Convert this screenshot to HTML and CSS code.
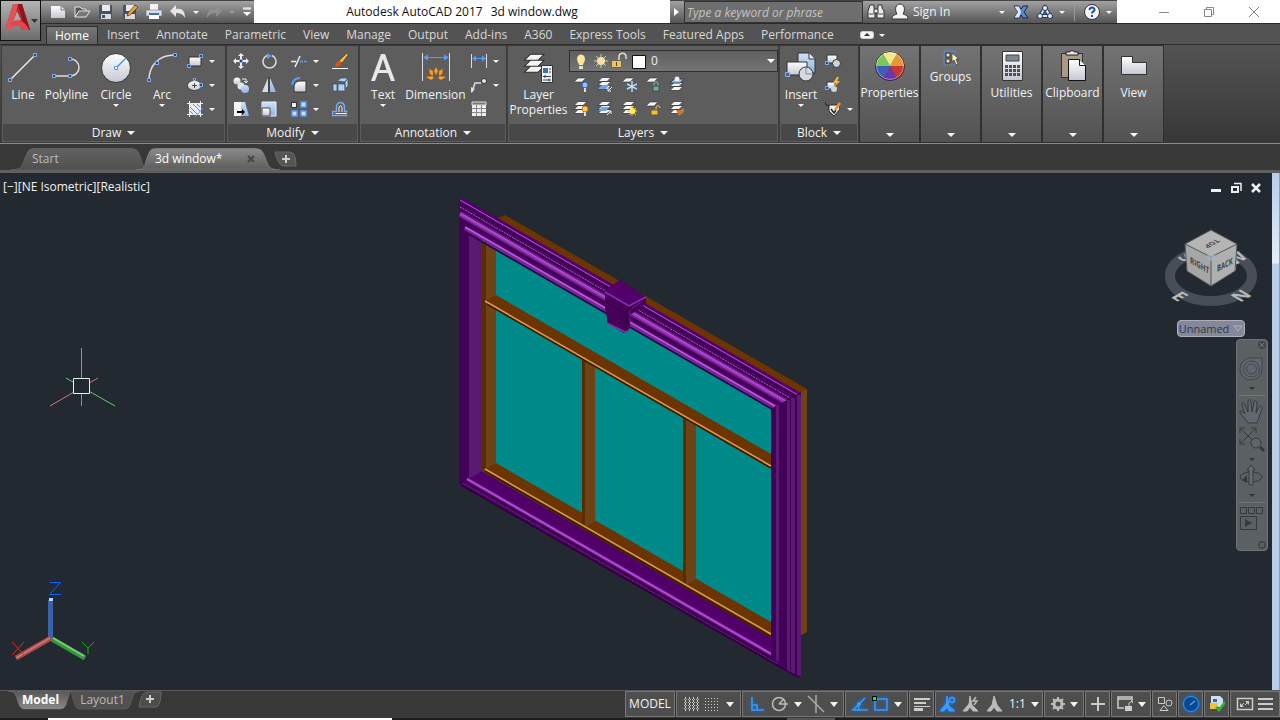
FILE: index.html
```html
<!DOCTYPE html>
<html lang="en">
<head>
<meta charset="utf-8">
<title>Autodesk AutoCAD 2017 - 3d window.dwg</title>
<link rel="stylesheet" href="styles.css">
</head>
<body>
<svg class="defs" aria-hidden="true">
  <defs>
    <linearGradient id="white" x1="0" y1="0" x2="0" y2="1"><stop offset="0" stop-color="#fff"/><stop offset="1" stop-color="#c4c8d2"/></linearGradient>
    <linearGradient id="blue" x1="0" y1="0" x2="0" y2="1"><stop offset="0" stop-color="#cfe0f5"/><stop offset="1" stop-color="#8db4e6"/></linearGradient>
    <linearGradient id="tabOff" x1="0" y1="0" x2="0" y2="1"><stop offset="0" stop-color="#626262"/><stop offset="1" stop-color="#4f4f4f"/></linearGradient>
    <linearGradient id="tabOn" x1="0" y1="0" x2="0" y2="1"><stop offset="0" stop-color="#8a8a8a"/><stop offset="1" stop-color="#5c5c5c"/></linearGradient>
    <linearGradient id="tabOnDown" x1="0" y1="0" x2="0" y2="1"><stop offset="0" stop-color="#565656"/><stop offset="1" stop-color="#8a8a8a"/></linearGradient>
    <symbol id="sheets" viewBox="0 0 16 16"><path d="M5 9.500h9l-4 4H1zM5 5.500h9l-4 4H1zM5 1.500h9l-4 4H1z" fill="#f4f5f7" stroke="#2c2c2c" stroke-width=".7"/></symbol>
    <symbol id="sheet" viewBox="0 0 16 16"><path d="M5 2h8L9 6H1z" fill="#f2f3f5" stroke="#333" stroke-width=".6"/></symbol>
  </defs>
</svg>
<div class="app">
  <header class="header">
    <button class="app-menu" aria-label="Application menu">
      <svg width="38" height="38" viewBox="0 0 38 38"><path d="M3 28 11 2h9l8 26h-8l-2-7-8 2-1 5z" fill="#b8252b"/><path d="M11 2h5L10 28H3z" fill="#df5359"/><path d="m15 9 4 9-8 3z" fill="#a9a9a9"/><path d="m16 2 4 0 8 26h-5z" fill="#8f151b"/><path d="M9 21c5-5 14-3 18 7h-6c-3-5-7-5-13-3z" fill="#e6444a"/><path d="M29 17h7l-3.500 4z" fill="#263645"/></svg>
    </button>
    <div class="titlebar">
      <div class="quick">
        <button aria-label="New"><svg width="18" height="16"><path d="M2 2h10l4 4v8H2z" fill="url(#white)"/><path d="M12 2v4h4" fill="none" stroke="#777"/></svg></button>
        <button aria-label="Open"><svg width="18" height="16"><path d="M2 13V3h5l2 2h4v3H6z" fill="#555" stroke="#dfe3ea"/><path d="M2 13 6 7h11l-4 6z" fill="#777" stroke="#dfe3ea"/></svg></button>
        <button aria-label="Save"><svg width="18" height="16"><path d="M2 1h13v14H2z" fill="#475363"/><path d="M5 1h8v6H5z" fill="#e6e9ee"/><path d="M4 10h10v5H4z" fill="#d5dae1"/><path d="M5 11h3v3H5z" fill="#475363"/></svg></button>
        <button aria-label="Save as"><svg width="18" height="16"><path d="M2 1h13v14H2z" fill="#475363"/><path d="M5 1h8v6H5z" fill="#e6e9ee"/><path d="M4 10h10v5H4z" fill="#d5dae1"/><path d="m6 12 1-3 7-8 3 2-8 8z" fill="#f1a33a" stroke="#4b3210" stroke-width=".7"/></svg></button>
        <button aria-label="Plot"><svg width="18" height="16"><path d="M5 0h8v6H5z" fill="#f3f3f3"/><path d="M1 6h16v6H1z" fill="#d9dce2" stroke="#666" stroke-width=".5"/><path d="M4 9h10v2H4z" fill="#3c6fb4"/><path d="M4 11h10v4H4z" fill="#fff"/></svg></button>
        <button aria-label="Undo"><svg width="18" height="16"><path d="m1 7 6-6v4c6-1 9 2 9 9-2-4-5-5-9-5v4z" fill="#e2e6ec"/></svg><i class="caret"></i></button>
        <button aria-label="Redo"><svg width="18" height="16"><path d="m17 7-6-6v4C5 4 2 7 2 14c2-4 5-5 9-5v4z" fill="#8e8e8e"/></svg><i class="caret dim"></i></button>
        <button aria-label="Customize"><svg width="12" height="12"><path d="M2 2h8M2 3h8" stroke="#fff"/><path d="M2 6h8l-4 4z" fill="#fff"/></svg></button>
      </div>
      <h1 class="doc-title"><span>Autodesk AutoCAD 2017</span><span>3d window.dwg</span></h1>
      <div class="info">
        <button class="expand" aria-label="Collapse search"><svg width="6" height="10"><path d="m0 1 5 4-5 4z" fill="#fff"/></svg></button>
        <input class="search" type="text" aria-label="Search" placeholder="Type a keyword or phrase">
        <button class="find" aria-label="Find"><svg width="18" height="16"><path d="M3 1h4v3l1 2v8H1V7zM11 1h4v3l2 3v7h-7V6l1-2z" fill="#e9e9ee" stroke="#333"/><path d="M7 5h4v4H7z" fill="#e9e9ee" stroke="#333"/><path d="M2 10h5M11 10h5" stroke="#555"/></svg></button>
        <button class="sign"><svg width="18" height="18"><path d="M1 16c0-4 3-4 5-5C3 6 5 1 9 1s6 5 3 10c2 1 5 1 5 5z" fill="#f4f4f8" stroke="#333"/></svg><span>Sign In</span><i class="caret"></i></button>
        <button aria-label="Exchange"><svg width="16" height="16"><path d="M1 2h5l2 3 2-3h5l-4 6 4 6h-5l-2-3-2 3H1l4-6z" fill="#5f84d4" stroke="#18264e"/><path d="M1.500 2.500H6L8 8l-2 5.500H1.500L5 8z" fill="#dfe5f3"/></svg></button>
        <button aria-label="A360"><svg width="18" height="16"><path d="m9 4-5 8h10z" fill="none" stroke="#20355f" stroke-width="4"/><path d="m9 4-5 8h10z" fill="none" stroke="#e3e7f2" stroke-width="2"/><g fill="#e7ebf5" stroke="#20355f"><circle cx="9" cy="4" r="2.500"/><circle cx="4" cy="12" r="2.500"/><circle cx="14" cy="12" r="2.500"/></g></svg><i class="caret"></i></button>
        <button class="help" aria-label="Help"><svg width="18" height="18"><circle cx="9" cy="9" r="7.500" fill="#f4f6fa" stroke="#333"/><path d="M6.500 7c0-3.500 5.500-3 5 0-.3 1.500-2.500 1.500-2.500 3.500M9 12v2" fill="none" stroke="#1b4db5" stroke-width="2"/></svg><i class="caret"></i></button>
      </div>
      <div class="win">
        <button aria-label="Minimize"><svg width="12" height="12"><path d="M1 6.500h10" stroke="#888"/></svg></button>
        <button aria-label="Restore"><svg width="12" height="12" fill="none" stroke="#888"><path d="M1.500 3.500h7v7h-7zM3.500 3V1.500h7v7H9"/></svg></button>
        <button aria-label="Close"><svg width="12" height="12"><path d="m1 1 10 10M11 1 1 11" stroke="#888"/></svg></button>
      </div>
    </div>
    <nav class="tabs">
      <button class="on">Home</button><button>Insert</button><button>Annotate</button><button>Parametric</button><button>View</button><button>Manage</button><button>Output</button><button>Add-ins</button><button>A360</button><button>Express Tools</button><button>Featured Apps</button><button>Performance</button>
      <button class="mini" aria-label="Minimize ribbon"><svg width="14" height="8"><rect x=".5" y=".5" width="13" height="7" rx="2" fill="#f4f4f4" stroke="#ccc"/><path d="M4 5h6L7 2z" fill="#333"/></svg><i class="caret"></i></button>
    </nav>
  </header>

  <section class="ribbon">
    <div class="panel draw">
      <div class="body">
        <button class="big"><svg width="32" height="32"><path d="M3 28 28 3" stroke="#eee" stroke-width="1.500"/><path d="M1.500 26.500h3v3h-3zM26.500 1.500h3v3h-3z" fill="#345" stroke="#7fb0ff"/></svg><span>Line</span></button>
        <button class="big"><svg width="32" height="32"><path d="M3 24h16c12 0 12-17 0-17" fill="none" stroke="#ddd" stroke-width="1.500"/><path d="M1.500 22.500h3v3h-3zM17.500 22.500h3v3h-3zM17.500 5.500h3v3h-3z" fill="#345" stroke="#7fb0ff"/></svg><span>Polyline</span></button>
        <button class="big"><svg width="32" height="32"><circle cx="16" cy="16" r="14.500" fill="url(#white)" stroke="#333"/><path d="M16 16 26 6" stroke="#4c8df0" stroke-width="1.500"/><path d="M14.500 14.500h3v3h-3z" fill="#fff" stroke="#4c8df0"/></svg><span>Circle</span><i class="caret"></i></button>
        <button class="big"><svg width="32" height="32"><path d="M3 28C3 14 12 3 29 3" fill="none" stroke="#ddd" stroke-width="1.500"/><path d="M1.500 26.500h3v3h-3zM9.500 9.500h3v3h-3zM27.500 1.500h3v3h-3z" fill="#345" stroke="#7fb0ff"/></svg><span>Arc</span><i class="caret"></i></button>
        <div class="small">
          <button aria-label="Rectangle"><svg width="16" height="16"><path d="M2 4h12v9H2z" fill="url(#white)" stroke="#333"/><path d="M.5 11.500h3v3h-3zM12.500 1.500h3v3h-3z" fill="#345" stroke="#7fb0ff"/></svg><i class="caret"></i></button>
          <button aria-label="Ellipse"><svg width="16" height="16"><ellipse cx="7.500" cy="8.500" rx="7" ry="5" fill="url(#white)" stroke="#444"/><path d="M5 8.500h5M7.500 6v5" stroke="#444"/><path d="M6.500 1.500h2v2h-2zM12.500 6.500h3v3h-3z" fill="#345" stroke="#7fb0ff"/></svg><i class="caret"></i></button>
          <button aria-label="Hatch"><svg width="16" height="16"><path d="M3 3h10v10H3z" fill="#e8edf5"/><path d="m3 6 7 7M3 10l3 3M6 3l7 7M10 3l3 3" stroke="#5a8ed8"/><path d="M0 2.500h16M0 13.500h16M2.500 0v16M13.500 0v16" stroke="#eee"/><path d="m8 16 8-9" stroke="#5b9bff"/></svg><i class="caret"></i></button>
        </div>
      </div>
      <button class="foot">Draw<i class="caret lg"></i></button>
    </div>

    <div class="panel modify">
      <div class="body">
        <div class="grid4">
          <button aria-label="Move"><svg width="16" height="16"><path d="M8 0l3 3H9v3H7V3H5zM8 16l3-3H9v-3H7v3H5zM0 8l3-3v2h3v2H3v2zM16 8l-3-3v2h-3v2h3v2z" fill="#eee"/><path d="M6.500 6.500h3v3h-3z" fill="#345" stroke="#7fb0ff"/></svg></button>
          <button aria-label="Rotate"><svg width="16" height="16"><path d="M11 2.500a6.500 6.500 0 1 1-5 0" fill="none" stroke="#ddd" stroke-width="1.500"/><path d="m6 0 5 3-5 3z" fill="#5b9bff"/></svg></button>
          <button aria-label="Trim"><svg width="16" height="16"><path d="M0 8.500h5M4 14 9 3" stroke="#eee" stroke-width="1.500"/><path d="M9 8.500h7" stroke="#5b9bff" stroke-width="1.500" stroke-dasharray="3 1"/></svg><i class="caret"></i></button>
          <button aria-label="Erase"><svg width="16" height="16"><path d="m7 8 8-8 1 2-6 8z" fill="#f3c04a" stroke="#5b3a10" stroke-width=".6"/><path d="M3 14c0-4 2-6 5-6l1 2c0 3-3 4-6 4z" fill="#d5541e"/><path d="M0 15.500h16" stroke="#fff"/></svg></button>
          <button aria-label="Copy"><svg width="16" height="16"><circle cx="4" cy="4" r="3.500" fill="url(#white)"/><circle cx="8" cy="9" r="3.500" fill="#dfe6f2"/><circle cx="12" cy="12" r="4" fill="url(#blue)"/><path d="M9 2h4v3M11 4l2 2 2-2" stroke="#eee" fill="none"/></svg></button>
          <button aria-label="Mirror"><svg width="16" height="16"><path d="M7 1v14H1z" fill="#d9dbe0"/><path d="M9 1v14h6z" fill="url(#blue)"/><path d="M8 0v16" stroke="#333"/></svg></button>
          <button aria-label="Fillet"><svg width="16" height="16"><path d="M3 15V9q1-5 6-5h6v11z" fill="url(#white)" stroke="#333"/><path d="M1 8Q2 1 9 1" fill="none" stroke="#5b9bff" stroke-width="2"/></svg><i class="caret"></i></button>
          <button aria-label="Explode"><svg width="16" height="16"><path d="M5 4 9 1h7l-3 4zM13 5l3-4v8l-3 3zM1 7h4v7H1zM6 7h7v7H6z" fill="#b9cfe9" stroke="#345679" stroke-width=".8"/></svg></button>
          <button aria-label="Stretch"><svg width="16" height="16"><path d="M1 1h7v14H1z" fill="#f5f5f5"/><path d="M8 1h4l4 14H8z" fill="url(#blue)"/><path d="M4 11h6" stroke="#000" stroke-width="2"/><path d="m9 8 3 3-3 3z"/></svg></button>
          <button aria-label="Scale"><svg width="16" height="16"><path d="M1 1h14v14H1z" fill="url(#blue)" stroke="#eef"/><path d="M1 7h8v8H1z" fill="url(#white)" stroke="#444"/></svg></button>
          <button aria-label="Array"><svg width="16" height="16"><path d="M.5 1.500h5v5h-5z" fill="#eee" stroke="#333"/><path d="M10 1h5v5h-5zM1 10h5v5H1zM10 10h5v5h-5z" fill="#cfe0f5" stroke="#5b9bff" stroke-width="1.500"/></svg><i class="caret"></i></button>
          <button aria-label="Offset"><svg width="16" height="16"><path d="M15.500 14.500h-15v-4h4V5q1-3.500 4-3.500T12.500 5v5.500h3" fill="none" stroke="#79a9ee" stroke-width="1.500"/><path d="M15 12.500H3.500M7 11V6q2-3 3 0v5" fill="none" stroke="#eee"/></svg></button>
        </div>
      </div>
      <button class="foot">Modify<i class="caret lg"></i></button>
    </div>

    <div class="panel anno">
      <div class="body">
        <button class="big"><svg width="32" height="32"><path d="M4 29 14 2h4l10 27h-4l-3-8H11l-3 8zM12.500 18h7L16 7z" fill="#e8e8e8"/></svg><span>Text</span><i class="caret"></i></button>
        <button class="big"><svg width="32" height="32"><path d="M2.500 1v28M29.500 1v28" stroke="#ddd"/><path d="M5 5.500h22" stroke="#5b9bff"/><path d="m3 5.500 5-3v6zM29 5.500l-5-3v6z" fill="#5b9bff"/><g fill="#ffa52a" stroke="#b8651a" stroke-width=".5"><path d="m16 15 2 4-2 4-2-4zM9 17l4 2 0 5-3-2zM23 17l-4 2 0 5 3-2zM6 25l6-1 2 2-3 2zM26 25l-6-1-2 2 3 2z"/></g></svg><span>Dimension</span></button>
        <div class="small">
          <button aria-label="Linear"><svg width="16" height="16"><path d="M.5 1v14M15.500 1v14" stroke="#ddd"/><path d="M2 5.500h12" stroke="#5b9bff"/><path d="m1 5.500 4-3v6zM15 5.500l-4-3v6z" fill="#5b9bff"/></svg><i class="caret"></i></button>
          <button aria-label="Leader"><svg width="16" height="16"><path d="M1 15 4 6h6" fill="none" stroke="#ddd" stroke-width="1.500"/><circle cx="13" cy="4" r="2.500" fill="#e5e8ee" stroke="#333"/><path d="m0 16 0-6 4 2z" fill="#ddd"/></svg><i class="caret"></i></button>
          <button aria-label="Table"><svg width="16" height="16"><path d="M1 1h14v14H1z" fill="#eee"/><path d="M1 1h14v3H1z" fill="#777" stroke="#ddd"/><path d="M1 7.500h14M1 11.500h14M5.500 4v11M10.500 4v11" stroke="#888"/></svg></button>
        </div>
      </div>
      <button class="foot">Annotation<i class="caret lg"></i></button>
    </div>

    <div class="panel layers">
      <div class="body">
        <button class="big"><svg width="32" height="32"><use href="#sheets" x="0" y="0" width="24" height="24"/><path d="M18.500 13.500h11v17h-11z" fill="#f2f3f6" stroke="#333"/><path d="M20 16h5v5h-5z" fill="#3d70b5"/><path d="M26 17h2M26 20h2M20 24.500h8M20 28h8M22 23v3M26 26.500v3" stroke="#345"/></svg><span>Layer<br>Properties</span></button>
        <div class="layer-tools">
          <div class="combo">
            <svg width="84" height="18"><path d="M4 7c0-6 8-6 8 0 0 3-2 4-2 6H6c0-2-2-3-2-6z" fill="#fbe69a"/><path d="M6 14h4v3H6z" fill="#ddd"/><g stroke="#d2ccbb"><path d="M28 2v14M21 9h14M23 4l10 10M33 4 23 14"/></g><circle cx="28" cy="9" r="4" fill="#f9dfa0"/><path d="M46 9V5c0-5 7-5 7 0v2" fill="none" stroke="#e6e0c8" stroke-width="1.500"/><path d="M38.500 8.500h10v7h-10z" fill="#e8c45a" stroke="#665"/><path d="M43.500 10v4" stroke="#543"/><path d="M59.500 3.500h13v13h-13z" fill="#fff" stroke="#111"/></svg>
            <select aria-label="Layer"><option>0</option></select>
          </div>
          <div class="layer-grid">
            <button aria-label="Off"><svg width="16" height="16"><use href="#sheet" width="16" height="16"/><circle cx="12" cy="9" r="3" fill="#8fc2fa" stroke="#2b63a8"/><path d="M11 12h2v4h-2z" fill="#ddd"/></svg></button>
            <button aria-label="Isolate"><svg width="16" height="16"><use href="#sheets" width="16" height="16"/><path d="M5 9h7l-3 4H1z" fill="#6aa5ee"/><path d="m15 11-4 4m0-3v3h3" stroke="#eee" fill="none"/></svg></button>
            <button aria-label="Freeze"><svg width="16" height="16"><use href="#sheet" width="16" height="16"/><path d="M11 5v11M6 8l10 5M6 13l10-5" stroke="#b7dcff" stroke-width="1.500"/></svg></button>
            <button aria-label="Lock"><svg width="16" height="16"><use href="#sheet" width="16" height="16"/><path d="M9 10V8c0-3 4-3 4 0v2" fill="none" stroke="#9bb"/><path d="M8 10h6v5H8z" fill="#7ba7a6" stroke="#355"/></svg></button>
            <button aria-label="Make current"><svg width="16" height="16"><use href="#sheets" y="1" width="16" height="16"/><path d="M5 3h10l-4 4H1z" fill="#8ebcf0" stroke="#345"/><circle cx="8" cy="3" r="2.500" fill="#eee"/></svg></button>
            <button aria-label="All on"><svg width="16" height="16"><use href="#sheets" width="16" height="16"/><circle cx="12" cy="9" r="3" fill="#ffcd55" stroke="#d46b10"/><path d="M11 12h2v4h-2z" fill="#ddd"/></svg></button>
            <button aria-label="Unisolate"><svg width="16" height="16"><use href="#sheets" width="16" height="16"/><path d="M5 7h7l-3 4H1z" fill="#6aa5ee"/><path d="m10 15 4-4m-3 0h3v3" stroke="#eee" fill="none"/></svg></button>
            <button aria-label="Thaw"><svg width="16" height="16"><use href="#sheets" width="16" height="16"/><path d="M11 6v10M6 11h10M8 8l7 7M15 8l-7 7" stroke="#ffb733"/><circle cx="11.500" cy="11" r="3" fill="#ffe84b"/></svg></button>
            <button aria-label="Unlock"><svg width="16" height="16"><use href="#sheet" width="16" height="16"/><path d="M11 10V8c0-3 4-3 4 0" fill="none" stroke="#f3d35a"/><path d="M6 10h7v5H6z" fill="#f4c622" stroke="#654"/></svg></button>
            <button aria-label="Match"><svg width="16" height="16"><use href="#sheets" width="16" height="16"/><path d="m7 10 4 0 4-2 0 4-5 4z" fill="#c67931"/></svg></button>
          </div>
        </div>
      </div>
      <button class="foot">Layers<i class="caret lg"></i></button>
    </div>

    <div class="panel block">
      <div class="body">
        <button class="big"><svg width="32" height="32"><path d="M13 1h11l6 6v14H13z" fill="url(#blue)" stroke="#333"/><path d="M24 1v6h6" fill="#eef" stroke="#333"/><path d="M2 10h20v13H2z" fill="url(#white)" stroke="#333"/><circle cx="21" cy="22" r="7" fill="#d5d9e1" stroke="#333"/><path d="M21 22v-7M21 22h7" stroke="#888"/><path d="M.5 20.500h4v4h-4z" fill="#567" stroke="#7fb0ff"/></svg><span>Insert</span><i class="caret"></i></button>
        <div class="small">
          <button aria-label="Create block"><svg width="16" height="16"><path d="M2 2h10v8H2z" fill="url(#white)" stroke="#333"/><circle cx="11.500" cy="10.500" r="4" fill="#cfd3dc" stroke="#333"/><path d="M.5 8.500h3v3h-3z" fill="#345" stroke="#7fb0ff"/></svg></button>
          <button aria-label="Edit block"><svg width="16" height="16"><path d="M2 5h8v7H2z" fill="url(#white)" stroke="#333"/><circle cx="9" cy="12" r="3" fill="#cfd3dc"/><path d="m12 0-4 6h3l-2 4 6-6h-3l2-4z" fill="#ffbb3a"/><path d="M.5 9.500h3v3h-3z" fill="#345" stroke="#7fb0ff"/></svg></button>
          <button aria-label="Edit attributes"><svg width="16" height="16"><path d="M4 4h9l2 4-6 7-5-5z" fill="#eee" stroke="#333"/><path d="m6 8 3 4 2-3" stroke="#222" stroke-width="1.500" fill="none"/><path d="m10 9 5-7" stroke="#f0992b" stroke-width="2.500"/><path d="M0 1c0 3 2 3 4 4" stroke="#111" fill="none"/></svg><i class="caret"></i></button>
        </div>
      </div>
      <button class="foot">Block<i class="caret lg"></i></button>
    </div>

    <button class="folded"><svg width="32" height="32"><path d="M16 16 8.500 3a15 15 0 0 1 15 0z" fill="#f3e98a"/><path d="m16 16 7.500-13A15 15 0 0 1 31 16z" fill="#e8963a"/><path d="M16 16h15a15 15 0 0 1-7.500 13z" fill="#c33a33"/><path d="m16 16 7.500 13a15 15 0 0 1-15 0z" fill="#6d35a5"/><path d="M16 16 8.500 29A15 15 0 0 1 1 16z" fill="#3c5fb8"/><path d="M16 16H1A15 15 0 0 1 8.500 3z" fill="#7cc75c"/><circle cx="16" cy="16" r="14.500" fill="none" stroke="#2c2c3c"/><circle cx="16" cy="16" r="13.500" fill="none" stroke="#fff" opacity=".4"/></svg><span>Properties</span><i class="caret lg"></i></button>
    <button class="folded"><svg width="16" height="16"><path d="M1 1h11v14H1z" fill="none" stroke="#5b9bff" stroke-dasharray="1 1"/><path d="M3 3h4v4H3zM3 9h4v4H3z" fill="#e9dfa6" stroke="#333"/><path d="m9 3 0 9 2-2 2 5 2-1-2-5h3z" fill="#f7f0b8" stroke="#333" stroke-width=".7"/></svg><span>Groups</span><i class="caret lg"></i></button>
    <button class="folded"><svg width="32" height="32"><path d="M6.500 1.500h20v29h-20z" fill="url(#white)" stroke="#333"/><path d="M10 5h13v6H10z" fill="#7b8794" stroke="#444"/><path d="M9 16.500h15M9 20.500h15M9 24.500h15" stroke="#49525c" stroke-width="3" stroke-dasharray="3 1"/></svg><span>Utilities</span><i class="caret lg"></i></button>
    <button class="folded"><svg width="32" height="32"><path d="M4.500 3.500h21v24h-21z" fill="#a99a88" stroke="#333"/><path d="M9 5V2h3q3-3 6 0h3v3z" fill="#e5e7ec" stroke="#222"/><path d="M11.500 9.500h11l6 6v15h-17z" fill="url(#white)" stroke="#111"/><path d="M22.500 9.500v6h6" fill="#fff" stroke="#111"/></svg><span>Clipboard</span><i class="caret lg"></i></button>
    <button class="folded"><svg width="32" height="32"><path d="M3.500 6.500h11v6h14v12h-25z" fill="url(#white)" stroke="#333"/></svg><span>View</span><i class="caret lg"></i></button>
  </section>

  <nav class="files">
    <button class="file"><svg width="138" height="22" viewBox="0 0 138 22"><path d="M0 22c12 0 12-4 15-12S19 .5 26 .5h94c9 0 9 5 11 11s3 10 7 10.500z" fill="url(#tabOff)" stroke="#6e6e6e" stroke-width=".6"/></svg><span>Start</span></button>
    <button class="file current"><svg width="144" height="22" viewBox="0 0 144 22"><path d="M0 22c10 0 8-4 11-12S14 .5 22 .5h96c8 0 9 3 12 11s4 10 14 10.500z" fill="url(#tabOn)" stroke="#8c8c8c" stroke-width=".6"/></svg><span>3d window*</span><b><svg width="8" height="8"><path d="m1 1 6 6M7 1 1 7" stroke="#444" stroke-width="2"/></svg></b></button>
    <button class="add" aria-label="New drawing"><svg width="24" height="16"><path d="M1 1h15q6 0 6 14H10Q4 15 1 1z" fill="#555" stroke="#686868"/><path d="M12 4v8M8 8h8" stroke="#ccc" stroke-width="2"/></svg></button>
  </nav>

  <main class="viewport">
    <div class="vp-label">[−][NE Isometric][Realistic]</div>
    <div class="vp-win">
      <button aria-label="Minimize drawing"><svg width="12" height="12"><path d="M1 7h10v3H1z" fill="#eee"/></svg></button>
      <button aria-label="Restore drawing"><svg width="12" height="12" fill="none" stroke="#eee"><path d="M2 5h6v5H2z" stroke-width="2"/><path d="M4 1.500h7V9" stroke-width="1.500"/></svg></button>
      <button aria-label="Close drawing"><svg width="12" height="12"><path d="m2 2 8 8M10 2l-8 8" stroke="#eee" stroke-width="2.500"/></svg></button>
    </div>

    <svg class="model" width="356" height="486" viewBox="455 195 356 486">
      <path d="M498 218 505 215 807 389v243l-6 3-20-230z" fill="#6b3400"/>
      <path d="M801 392 807 389v243l-6 3z" fill="#6e4316"/>
      <path d="M459 200 463 198 801 393v283l-3 2-339-194z" fill="#51006a"/>
      <path d="M482 238 771 405v232L482 471z" fill="#008b8a"/>
      <path d="M459 214 469 222v258l-10 5z" fill="#430059"/>
      <path d="M469 234 482 242v229l-13 8z" fill="#5a1a72"/>
      <path d="M482 242h4v226l-4 3z" fill="#5a2d00"/>
      <path d="M486 244 496 250v214l-10 5z" fill="#6e4316"/>
      <path d="M485 301 496 295 771 454v14L485 303z" fill="#6b3400"/>
      <path d="M485 469 496 463 771 622v16L482 471z" fill="#6b3400"/>
      <path d="M582 358v168l3 2V360z" fill="#5a2d00"/><path d="M585 360 595 366v155l-10 6z" fill="#6e4316"/>
      <path d="M683 417v167l3 2V419z" fill="#5a2d00"/><path d="M686 419 696 424v155l-10 6z" fill="#6e4316"/>
      <path d="m487 304 284 164M485 471l286 166" stroke="#3e2000" stroke-width="2"/>
      <path d="m485 301 286 165M485 469l286 165" stroke="#e09a55" stroke-width="1.500"/>
      <path d="m466 482 308 178M461 485l337 192" stroke="#32003f" stroke-width="2"/>
      <path d="m463 483 315 181" stroke="#72248c" stroke-width="1" stroke-dasharray="2 1"/>
      <path d="m467 479 306 176" stroke="#9230b4" stroke-width="3"/><path d="m467 479 306 176" stroke="#c05ce0" stroke-width="1"/>
      <path d="m462 204 336 194M462 210l330 190M464 221l312 181M467 233l305 176" stroke="#380048" stroke-width="2"/>
      <path d="m460 200 338 195" stroke="#b858d6"/>
      <path d="m460 207 330 191" stroke="#b455d0" stroke-dasharray="2 1"/>
      <path d="m460 214 326 188" stroke="#6f1a8b" stroke-width="6"/><path d="m460 214 326 188" stroke="#9739b8" stroke-width="3"/><path d="m460 213 326 188" stroke="#b857d8" stroke-width="1"/>
      <path d="m465 228 310 179" stroke="#7a2298" stroke-width="4"/><path d="m465 227 310 179" stroke="#bd5cdc" stroke-width="1.500"/>
      <path d="M771 409 801 392v284l-3 1-27-20z" fill="#430059"/>
      <path d="M776 405h3v257l-3-2zM787 400h3v272l-3-2zM791 398h4v276l-4-2zM797 395h4v281l-4-1z" fill="#5a1a72"/>
      <path d="M605 290 620 280l26 17v6l-4 4-12 8v15l-6 3-17-10v-6l-2-8z" fill="#460058"/>
      <path d="M605 291 620 280l26 17-17 9z" fill="#52006a"/>
      <path d="m605 292 24 14 17-9M607 323l18 9 5-3" fill="none" stroke="#8c2fae" stroke-width="1.500"/>
      <path d="M630 310v12M632 308l10-6" stroke="#6a1f85"/>
      <path d="m606 302 21 12v17" fill="none" stroke="#2d003b"/>
    </svg>

    <svg class="cursor" width="68" height="60" viewBox="48 347 68 60"><path d="M81.500 348v58" stroke="#8e9299"/><path d="m98 378-48 28" stroke="#d17b72"/><path d="m66 378 49 28" stroke="#69c86b"/><path d="M73.500 378.500h16v15h-16z" fill="#232930" stroke="#eee"/></svg>

    <svg class="ucs" width="86" height="84" viewBox="10 580 86 84" fill="none"><path d="M50.500 640v-40" stroke="#3a62a8" stroke-width="5"/><path d="M49 598h4v3h-4z" fill="#a7dcff"/><path d="m52 639 33 19" stroke="#3a9340" stroke-width="5"/><path d="m53 638 31 18" stroke="#72d270" stroke-width="2"/><path d="m51 638-35 20" stroke="#a94a4a" stroke-width="5"/><path d="m50 638-34 20" stroke="#c97a76" stroke-width="1.500"/><path d="M49.500 582.500h11l-11 12h11.500" stroke="#0e62ff"/><path d="m12 642 12 13M24 642l-12 13" stroke="#ef2222"/><path d="m82 642 6 6 6-6M88 648v6" stroke="#12b312"/></svg>

    <svg class="cube" width="96" height="84" viewBox="1163 226 96 84">
      <ellipse cx="1211" cy="276" rx="41" ry="25" fill="none" stroke="#464e57" stroke-width="10"/>
      <g class="compass"><text transform="matrix(.85 .5 -.85 .5 1175 297)" x="-3" y="3">E</text><text transform="matrix(.85 -.5 .85 .5 1241 299)" x="-4" y="3">N</text><text transform="matrix(.85 .5 -.85 .5 1181 258)" x="-3" y="2">S</text><text transform="matrix(.85 -.5 .85 .5 1236 262)" x="-5" y="3">W</text></g>
      <path d="m1211 230 26 14-1 26-25 16-24-16-2-26z" fill="#b5b5b5"/>
      <path d="m1185 244 26 13v29l-24-15z" fill="#a6a6a6"/><path d="m1237 244-26 13v29l24-15z" fill="#b0b0b0"/>
      <path d="m1211 230 26 14-26 13-26-13zM1185 244l2 27 24 15 24-15 2-27M1211 257v29" fill="none" stroke="#555"/>
      <g class="faces"><text transform="matrix(.7 .4 0 1 1190 263)">RIGHT</text><text transform="matrix(.65 -.35 0 1 1217 272)">BACK</text><text transform="matrix(-.7 .38 -.7 -.38 1216 239)">TOP</text></g>
      <circle cx="1211" cy="257" r="4" fill="#a3b5c4" opacity=".7"/>
    </svg>
    <button class="ucs-name">Unnamed<svg width="10" height="8"><path d="M1 1h8L5 6z" fill="none" stroke="#b0b2c0"/></svg></button>

    <div class="navbar">
      <button class="corner" aria-label="Close navigation bar"><svg width="10" height="10"><circle cx="5" cy="5" r="4" fill="#42474c"/><path d="m3 3 4 4M7 3 3 7" stroke="#73777b"/></svg></button>
      <button class="tool" aria-label="Steering wheel"><svg width="26" height="24"><path d="M13 1h10v11A11 11 0 1 1 13 1z" fill="#62666e" stroke="#3f454a"/><circle cx="12.500" cy="12" r="8" fill="none" stroke="#3f454a"/><circle cx="12.500" cy="12" r="5" fill="none" stroke="#3f454a"/></svg></button>
      <i class="caret dark"></i><hr>
      <button class="tool" aria-label="Pan"><svg width="26" height="26"><path d="m9 24-7-9c-3-4 1-4 4 0L3 6c0-3 2-3 3 0l3 7V3c0-3 3-3 3 0l1 10 2-10c0-2 3-2 3 1l-1 10 3-6c2-2 4 0 3 2l-5 14z" fill="#62666e" stroke="#343b40"/></svg></button>
      <button class="tool" aria-label="Zoom"><svg width="26" height="26"><path d="m2 3 14 14M16 3 2 17M1 7V2h5M12 2h5v5M1 13v5h5" fill="none" stroke="#343b40"/><circle cx="17" cy="17" r="5" fill="#60656a" stroke="#343b40"/><path d="m21 21 4 4" stroke="#343b40" stroke-width="3"/></svg></button>
      <i class="caret dark"></i>
      <button class="tool" aria-label="Orbit"><svg width="26" height="24"><ellipse cx="12" cy="13" rx="11" ry="5" fill="none" stroke="#343b40"/><path d="m12 1 4 5h-2v15h-4V6H8z" fill="#666b70" stroke="#343b40"/><path d="m8 11-5 5 5 3z" fill="#343b40"/></svg></button>
      <i class="caret dark"></i><hr>
      <button class="tool" aria-label="Show motion"><svg width="26" height="26"><path d="M1.500 1.500h6v6h-6zM9.500 1.500h6v6h-6zM17.500 1.500h6v6h-6zM1.500 10.500h16v13h-16z" fill="none" stroke="#343b40"/><path d="m6 13 7 4-7 4z" fill="#343b40"/></svg></button>
      <button class="corner end" aria-label="Navigation bar options"><svg width="10" height="10"><circle cx="5" cy="5" r="4" fill="#42474c"/><path d="M3 4h4M3 6h4" stroke="#73777b"/></svg></button>
    </div>
    <div class="edge"></div>
  </main>

  <footer class="bottom">
    <nav class="layouts">
      <button class="layout current"><svg width="64" height="19" viewBox="0 0 64 19"><path d="M0 0c8 0 8 5 10 11s4 7 7 7h35c6 0 6-5 8-11s2-7 4-7z" fill="url(#tabOnDown)" stroke="#777" stroke-width=".6"/></svg><span>Model</span></button>
      <button class="layout"><svg width="70" height="19" viewBox="0 0 70 19"><path d="M0 0c2 1 2 5 4 11s3 7 7 7h43c6 0 6-4 8-10s3-7 8-8z" fill="#515151" stroke="#686868" stroke-width=".6"/></svg><span>Layout1</span></button>
      <button class="layout-add" aria-label="Add layout"><svg width="24" height="18"><path d="M23 1q0 15-6 15H1Q3 1 9 1z" fill="#4d4d4d" stroke="#666"/><path d="M12 4v8M8 8h8" stroke="#ccc" stroke-width="2"/></svg></button>
    </nav>
    <div class="status">
      <button class="model-btn">MODEL</button>
      <div class="cell grids"><button aria-label="Grid"><svg width="16" height="16"><path d="M1 3.500h15M1 6.500h15M1 9.500h15M1 12.500h15" stroke="#bbb" stroke-dasharray="1 1"/><path d="M2.500 1v14M6.500 1v14M10.500 1v14M14.500 1v14" stroke="#ccc" stroke-dasharray="2 1"/></svg></button><button aria-label="Snap"><svg width="16" height="16"><path d="M1 2.500h14M1 5.500h14M1 8.500h14M1 11.500h14M1 14.500h14" stroke="#ccc" stroke-dasharray="1 2"/></svg></button><i class="caret md"></i></div>
      <div class="cell drafting"><button class="glow" aria-label="Ortho"><svg width="18" height="18"><path d="M4 2v13h12M4 10h5v5" fill="none" stroke="#3a9bff" stroke-width="1.500"/></svg></button><button aria-label="Polar"><svg width="18" height="18" fill="none" stroke="#bbb" stroke-width="1.500"><circle cx="8" cy="9" r="6.500"/><path d="M8 9h9M8 9l5-5"/></svg></button><i class="caret md"></i><button aria-label="Isodraft"><svg width="18" height="20" fill="none" stroke="#aaa" stroke-width="1.500"><path d="m1 2 16 16M9 1v18"/></svg></button><i class="caret md"></i></div>
      <div class="cell snaps"><button class="glow" aria-label="Tracking"><svg width="18" height="18"><path d="M14 3 2 15h15M8 15c0-3-1-4-2-5" fill="none" stroke="#3a9bff" stroke-width="1.500"/><circle cx="8" cy="9" r="2" fill="#3a9bff"/></svg></button><button class="glow" aria-label="Object snap"><svg width="18" height="18"><path d="M3 4h12v11H3z" fill="none" stroke="#3a9bff" stroke-width="1.500"/><path d="M.5 1.500h4v4h-4z" fill="#0f0" stroke="#000"/></svg></button><i class="caret md"></i></div>
      <div class="cell line"><button aria-label="Lineweight"><svg width="16" height="16"><path d="M0 3h16M0 7h12" stroke="#ccc" stroke-width="2"/><path d="M0 10.500h16" stroke="#ccc"/><path d="M0 13.500h9" stroke="#ccc" stroke-width="3"/></svg></button></div>
      <div class="cell scale"><button class="glow" aria-label="Annotation visibility"><svg width="18" height="18"><path d="m8 1 2 10 6 5H10L8 12l-3 4H1l6-7z" fill="#3a9bff" stroke="#3a9bff"/><circle cx="13" cy="5" r="2.500" fill="none" stroke="#3a9bff" stroke-width="1.500"/></svg></button><button aria-label="Auto scale"><svg width="18" height="18"><path d="m8 1 2 9 6 6h-5L8 12l-3 4H1l6-7z" fill="#bbb" stroke="#bbb"/><path d="m14 2-3 4 4 0-3 4" stroke="#bbb" fill="none" stroke-width="1.500"/></svg></button><button aria-label="Annotation scale"><svg width="18" height="18"><path d="m8 1 3 9 5 6h-5L8 12l-3 4H1l5-6z" fill="#bbb" stroke="#bbb"/></svg></button><button>1:1</button><i class="caret md"></i></div>
      <div class="cell gear"><button aria-label="Workspace"><svg width="16" height="16"><circle cx="8" cy="8" r="4" fill="none" stroke="#bbb" stroke-width="3"/><path d="M8 1v3M8 12v3M1 8h3M12 8h3M3 3l2 2M11 11l2 2M13 3l-2 2M5 11l-2 2" stroke="#bbb" stroke-width="2"/></svg></button><i class="caret md"></i></div>
      <div class="cell line"><button aria-label="Annotation monitor"><svg width="16" height="16"><path d="M8 1v14M1 8h14" stroke="#ccc" stroke-width="2"/></svg></button></div>
      <div class="cell gear"><button aria-label="Lock UI"><svg width="18" height="16"><path d="M7 12H1V1h14v5M1 3h14" fill="none" stroke="#ccc" stroke-width="1.500"/><path d="M12 10V7q3-3 4 0" fill="none" stroke="#ccc"/><path d="M8 10h7v5H8z" fill="#ccc"/></svg></button><i class="caret md"></i></div>
      <div class="cell line"><button aria-label="Isolate objects"><svg width="16" height="16" fill="none" stroke="#ccc"><path d="M1.500 1.500h6v6h-6zM3 14.500l4-5 4 5z"/><circle cx="12" cy="7" r="3"/></svg></button></div>
      <div class="cell line"><button class="glow" aria-label="Graphics performance"><svg width="18" height="18"><circle cx="9" cy="9" r="7.500" fill="#06498e" stroke="#2d94ff"/><path d="m8 10 5-4" stroke="#4ba5ff" stroke-width="1.500"/></svg></button></div>
      <div class="cell line"><button aria-label="Attachments"><svg width="16" height="18"><path d="M2 1h9l3 3v8H2z" fill="#cfe0f0"/><path d="M1 8h8v6H1z" fill="#f3c23b"/><path d="M4 4h4v3H4z" fill="#39679a"/><path d="m7 12 3 3 6-8" stroke="#36b52c" stroke-width="2.500" fill="none"/></svg></button></div>
      <div class="cell last"><button aria-label="Clean screen"><svg width="18" height="16"><path d="M1.500 2.500h15v11h-15z" fill="none" stroke="#ccc" stroke-width="1.500"/><path d="M9 5h4v4zM4 7v4h4z" fill="#ccc"/><path d="m12 6-3 3M5 10l3-3" stroke="#ccc"/></svg></button><button aria-label="Customization"><svg width="16" height="16"><path d="M0 3h15M0 8h15M0 13h15" stroke="#ccc" stroke-width="2"/></svg></button></div>
    </div>
  </footer>
  <div class="taskbar"><i></i><i></i></div>
</div>
</body>
</html>
```
FILE: styles.css
```css
* { box-sizing: border-box; }
body { margin: 0; font-family: "Open Sans", "Noto Sans", sans-serif; font-size: 12px; line-height: 16px; color: #f2f2f2; background: #383838; }
button { display: flex; align-items: center; justify-content: center; margin: 0; padding: 0; border: 0; background: none; color: inherit; font: inherit; white-space: nowrap; }
svg { display: block; flex: none; }
.defs { position: absolute; width: 0; height: 0; }
.app { display: flex; flex-direction: column; min-height: 100vh; }
.caret { width: 0; height: 0; border: 3px solid transparent; border-top-color: #f4f4f4; border-bottom-width: 0; flex: none; }
.caret.lg, .caret.md { border-width: 4px 4px 0; }
.caret.md { border-top-width: 5px; }
.caret.dim { border-top-color: #999; }
.caret.dark { border-top-color: #2f3539; }

/* Title bar and ribbon tabs */
.header { display: grid; grid-template-columns: 41px 1fr; grid-template-rows: 24px 20px; background: #535353; border-bottom: 1px solid #2d2d2d; }
.app-menu { grid-row: 1 / 3; align-self: start; height: 41px; border: 1px solid #111; background: linear-gradient(#b4b4b4, #6c6c6c); }
.titlebar { display: flex; background: #fff; border-bottom: 1px solid #2a2a2a; }
.quick, .info { display: flex; align-items: center; background: linear-gradient(#a2a2a2, #555); border-top: 1px solid #444; }
.quick { width: 213px; padding-left: 8px; gap: 6px; }
.quick button { gap: 6px; }
.doc-title { flex: 1; display: flex; justify-content: center; gap: 8px; margin: 0; font-size: 12px; line-height: 23px; font-weight: 400; color: #111; white-space: pre; }
.info { width: 447px; }
.expand { width: 14px; }
.search { width: 179px; height: 22px; padding: 0 2px; border: 1px solid #333; background: #6e6e6e; color: #eee; font: italic 12px "Open Sans", "Noto Sans", sans-serif; }
.search::placeholder { color: #c4c4c4; opacity: 1; }
.find { width: 26px; }
.sign { flex: 1; justify-content: flex-start; gap: 4px; padding: 0 8px 0 2px; }
.sign .caret { margin-left: auto; }
.info > button:nth-last-child(-n+3) { gap: 5px; }
.info > button:nth-last-child(2) { padding: 0 9px 0 7px; }
.info .help { padding: 0 5px 0 8px; border-left: 1px solid #999; }
.win { display: flex; align-items: center; width: 163px; padding-left: 24px; }
.win button { width: 45px; }
.tabs { display: flex; align-items: flex-end; padding-left: 5px; color: #d8d8d8; }
.tabs button { height: 18px; padding: 0 8px 0 9px; line-height: 16px; }
.tabs .on { padding: 0 8px; border: 1px solid #2d2d2d; border-bottom: 0; background: linear-gradient(#777, #5e5e5e); color: #fff; }
.tabs .mini { gap: 5px; margin-left: 18px; padding: 0; }

/* Ribbon */
.ribbon { display: flex; gap: 2px; padding: 1px 2px 1px; background: linear-gradient(#535353, #373737); border-bottom: 1px solid #8b8b8b; }
.panel { display: flex; flex-direction: column; background: #5d5d5d; box-shadow: 0 0 0 1px #3d3d3d; }
.draw { width: 223px; }
.modify { width: 131px; }
.anno { width: 146px; }
.layers { width: 270px; }
.block { width: 78px; }
.body { display: flex; height: 78px; padding-top: 3px; }
.big { flex-direction: column; justify-content: flex-start; padding-top: 3px; }
.big svg { margin-bottom: 3px; }
.big .caret { margin-top: 2px; }
.big span { line-height: 15px; text-align: center; }
.draw .big:nth-child(1) { width: 42px; }
.draw .big:nth-child(2) { width: 45px; }
.draw .big:nth-child(3) { width: 54px; }
.draw .big:nth-child(4) { width: 38px; }
.anno .big:nth-child(1) { width: 46px; }
.anno .big:nth-child(2) { width: 59px; }
.layers .big { width: 61px; }
.block .big { width: 42px; }
.small { display: grid; grid-template-rows: repeat(3, 24px); margin-left: 6px; }
.block .small { margin-left: 3px; }
.small button, .grid4 button { justify-content: flex-start; gap: 6px; }
.grid4 { display: grid; grid-template-columns: 28px 30px 41px 20px; grid-template-rows: repeat(3, 24px); padding-left: 6px; }
.foot { gap: 6px; height: 17px; margin: 0 1px 1px; background: #484848; }
.layer-tools { flex: 1; padding-top: 1px; }
.combo { display: flex; align-items: center; height: 22px; border: 1px solid #2f2f2f; background: linear-gradient(#5f5f5f, #757575); }
.combo svg { margin-right: -6px; margin-left: 3px; }
.combo select { flex: 1; height: 20px; margin: 0; padding: 0; border: 0; background: none; color: #eee; font: inherit; appearance: none; }
.combo::after { content: ""; margin-right: 2px; border: 4px solid transparent; border-top-color: #fff; border-bottom: 0; }
.layer-grid { display: grid; grid-template-columns: repeat(5, 24px); grid-template-rows: repeat(2, 24px); }
.folded { flex-direction: column; justify-content: flex-start; width: 59px; padding: 4px 0 5px; background: linear-gradient(#737373, #525252); box-shadow: 0 0 0 1px #303030; }
.folded span { margin-top: 3px; }
.folded .caret { margin-top: auto; }

/* Drawing tabs */
.files { display: flex; align-items: flex-end; height: 29px; padding: 0 10px 3px; background: linear-gradient(#383838, #383838) top / 100% 26px no-repeat #5f5f5f; }
.file { position: relative; width: 126px; height: 22px; justify-content: flex-start; padding-left: 22px; color: #bbb; }
.file > svg { position: absolute; left: 0; top: 0; }
.file span { position: relative; }
.current.file { width: 136px; padding-left: 19px; color: #fff; }
.file b { position: relative; margin-left: auto; margin-right: 17px; }
.add { height: 22px; margin-left: 2px; }

/* Drawing area */
.viewport { position: relative; flex: 1; overflow: hidden; min-height: 517px; background: #222930; }
.vp-label { position: absolute; left: 3px; top: 6px; }
.vp-win { position: absolute; right: 18px; top: 9px; display: flex; gap: 8px; }
.model { position: absolute; left: 455px; top: 22px; }
.cursor { position: absolute; left: 48px; top: 174px; }
.ucs { position: absolute; left: 10px; bottom: 26px; }
.cube { position: absolute; right: 21px; top: 53px; }
.compass { fill: #b8b8b8; font-size: 18px; font-weight: 700; }
.faces { fill: #444; font-size: 9px; font-weight: 700; }
.ucs-name { position: absolute; right: 35px; top: 147px; gap: 4px; width: 68px; height: 17px; border: 1px solid #aeb0bc; border-radius: 4px; background: #85889a; color: #333846; font-size: 11px; }
.navbar { position: absolute; right: 12px; top: 166px; display: flex; flex-direction: column; align-items: center; width: 32px; height: 212px; border: 1px solid #6d7174; border-radius: 4px; background: #5b6063; }
.navbar hr { width: 26px; margin: 3px 0 2px; border: 0; border-top: 1px solid #70757a; }
.corner { align-self: flex-end; height: 10px; }
.corner + .tool { margin-top: 7px; }
.tool { margin-top: 1px; }
.navbar > .caret { margin: 6px 0 2px; }
.end { margin-top: auto; }
.edge { position: absolute; right: 0; top: 0; bottom: 0; width: 8px; border-right: 1px solid #12d4e5; background: linear-gradient(#b9cee9, #e4ecfa 90px, #b9cee9 91px); }

/* Layout tabs and status bar */
.bottom { display: flex; justify-content: space-between; height: 28px; border-top: 1px solid #5a5a5a; background: #383838; }
.layouts { display: flex; align-items: flex-start; padding-left: 8px; }
.layout { position: relative; width: 62px; height: 17px; padding-left: 3px; color: #bbb; }
.layout > svg { position: absolute; left: 0; top: 0; }
.layout span { position: relative; }
.layout.current { color: #fff; font-weight: 700; }
.layout-add { margin-left: 6px; }
.status { display: flex; gap: 1px; height: 26px; background: #2f2f2f; }
.model-btn, .cell { border: 1px solid #777; background: #4e4e4e; }
.model-btn { width: 50px; }
.cell { display: flex; align-items: center; justify-content: space-around; padding: 0 3px; }
.grids { width: 65px; }
.drafting { width: 102px; }
.snaps { width: 63px; }
.line { width: 25px; padding: 0; justify-content: center; }
.scale { width: 108px; padding: 0; }
.gear { width: 40px; }
.last { width: 50px; }
.glow svg { filter: drop-shadow(0 0 2px #0878f0); }
.taskbar { display: flex; height: 2px; padding-left: 48px; background: #1d1d1d; }
.taskbar i { width: 344px; background: #fff; }
.taskbar i + i { width: 48px; margin-left: 395px; background: #555; }
```
